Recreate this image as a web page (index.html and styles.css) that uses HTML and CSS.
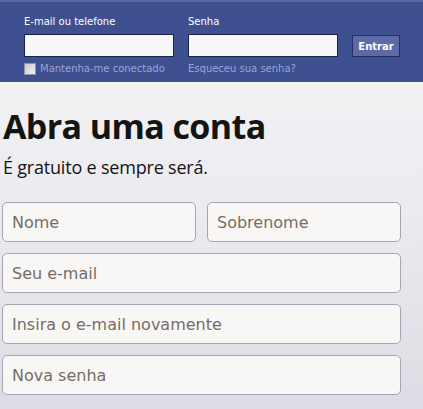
FILE: index.html
```html
<!DOCTYPE html>
<html lang="pt-BR">
<head>
<meta charset="utf-8">
<title>Facebook</title>
<link rel="stylesheet" href="styles.css">
</head>
<body>
<header class="topbar">
  <div class="login">
    <div class="field">
      <label class="lbl">E-mail ou telefone</label>
      <input class="tinput" type="text">
      <div class="below">
        <span class="check"></span>
        <span class="muted">Mantenha-me conectado</span>
      </div>
    </div>
    <div class="field">
      <label class="lbl">Senha</label>
      <input class="tinput" type="password">
      <div class="below">
        <span class="muted">Esqueceu sua senha?</span>
      </div>
    </div>
    <button class="enter">Entrar</button>
  </div>
</header>
<main class="signup">
  <h1 class="title">Abra uma conta</h1>
  <p class="sub">É gratuito e sempre será.</p>
  <div class="form">
    <div class="row two">
      <input class="big" placeholder="Nome">
      <input class="big" placeholder="Sobrenome">
    </div>
    <input class="big" placeholder="Seu e-mail">
    <input class="big" placeholder="Insira o e-mail novamente">
    <input class="big" placeholder="Nova senha">
  </div>
</main>
</body>
</html>
```
FILE: styles.css
```css
html, body { margin: 0; padding: 0; }
body {
  width: 423px;
  height: 409px;
  overflow: hidden;
  background: linear-gradient(180deg, #f5f4f6 0%, #ecebef 50%, #dddce4 100%);
  font-family: "DejaVu Sans", sans-serif;
}
.topbar {
  background: #3e5090;
  border-top: 2px solid #5869a6;
  box-sizing: border-box;
  height: 82px;
}
.login {
  display: flex;
  padding: 14px 0 0 24px;
  gap: 14px;
}
.field { display: flex; flex-direction: column; width: 150px; }
.lbl {
  color: #ffffff;
  font-family: "DejaVu Sans", sans-serif;
  font-size: 10px;
  line-height: 12px;
  height: 18px;
}
.tinput {
  box-sizing: border-box;
  width: 150px;
  height: 23px;
  margin: 0;
  border: 1px solid #1b2249;
  background: #f7f7f7;
  padding: 0 3px;
}
.below {
  display: flex;
  align-items: center;
  gap: 4px;
  margin-top: 6px;
  height: 12px;
}
.check {
  width: 10px;
  height: 10px;
  border: 1px solid #8c93a8;
  background: linear-gradient(135deg, #c9c9cd, #f2f2f2);
}
.muted {
  color: #9aa5d0;
  font-size: 10px;
  line-height: 12px;
  white-space: nowrap;
}
.enter {
  align-self: flex-start;
  margin-top: 19px;
  width: 48px;
  height: 22px;
  padding: 0;
  background: #5c6ba7;
  border: 1px solid #262f63;
  color: #ffffff;
  font-family: "DejaVu Sans", sans-serif;
  font-weight: bold;
  font-size: 10px;
}
.signup { padding: 0 0 0 2px; }
.title {
  margin: 24px 0 0 1px;
  font-family: "Open Sans", sans-serif;
  font-weight: 700;
  font-size: 34px;
  line-height: 40px;
  color: #141414;
  letter-spacing: -0.6px;
}
.sub {
  margin: 9px 0 0 1px;
  font-family: "Open Sans", sans-serif;
  font-size: 18px;
  line-height: 24px;
  color: #141414;
  letter-spacing: -0.2px;
}
.form {
  margin-top: 23px;
  width: 399px;
  display: flex;
  flex-direction: column;
  gap: 11px;
}
.row.two { display: flex; gap: 11px; }
.row.two .big { flex: 1; min-width: 0; }
.big {
  box-sizing: border-box;
  height: 40px;
  margin: 0;
  border: 1px solid #a5a5b3;
  border-radius: 5px;
  background: #f8f7f5;
  padding: 0 9px;
  font-family: "DejaVu Sans", sans-serif;
  font-size: 16px;
}
.big::placeholder { color: #776d66; opacity: 1; }
```
